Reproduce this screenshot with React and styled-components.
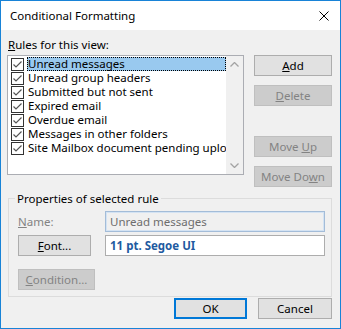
import React from 'react';
import styled, { createGlobalStyle } from 'styled-components';

const GlobalStyle = createGlobalStyle`
  html, body {
    margin: 0;
    padding: 0;
    background: #ffffff;
  }
  body {
    font-family: 'Noto Sans', 'Liberation Sans', sans-serif;
    font-size: 11.5px;
    color: #000000;
  }
  * {
    box-sizing: border-box;
  }
`;

const rules = [
  'Unread messages',
  'Unread group headers',
  'Submitted but not sent',
  'Expired email',
  'Overdue email',
  'Messages in other folders',
  'Site Mailbox document pending upload',
];

function CheckBox() {
  return (
    <svg width="13" height="13" viewBox="0 0 13 13">
      <rect x="0.5" y="0.5" width="12" height="12" fill="#ffffff" stroke="#333333" />
      <path d="M2.5 6.5 L5 9 L10.5 3.5" fill="none" stroke="#555555" strokeWidth="1.2" />
    </svg>
  );
}

function Chevron({ down }) {
  return (
    <svg width="9" height="5" viewBox="0 0 9 5">
      <path
        d={down ? 'M0.5 0.5 L4.5 4.5 L8.5 0.5' : 'M0.5 4.5 L4.5 0.5 L8.5 4.5'}
        fill="none"
        stroke="#a3a3a3"
        strokeWidth="1.3"
      />
    </svg>
  );
}

function App() {
  return (
    <>
      <GlobalStyle />
      <Window>
        <TitleBar>
          <Title>Conditional Formatting</Title>
          <CloseIcon viewBox="0 0 10 10">
            <path d="M0.5 0.5 L9.5 9.5 M9.5 0.5 L0.5 9.5" stroke="#000" strokeWidth="1" />
          </CloseIcon>
        </TitleBar>

        <Content>
          <Label><Key>R</Key>ules for this view:</Label>
          <TopRow>
            <ListBox>
              <Rows>
                {rules.map((r, i) => (
                  <Row key={r}>
                    <CheckBox />
                    <RowText $selected={i === 0}>{r}</RowText>
                  </Row>
                ))}
              </Rows>
              <ScrollBar>
                <Arrow><Chevron /></Arrow>
                <Arrow><Chevron down /></Arrow>
              </ScrollBar>
            </ListBox>
            <SideButtons>
              <Button><span><Key>A</Key>dd</span></Button>
              <Button $off><span><Key>D</Key>elete</span></Button>
              <Button $off $top={21}><span>Move <Key>U</Key>p</span></Button>
              <Button $off><span>Move Do<Key>w</Key>n</span></Button>
            </SideButtons>
          </TopRow>

          <Group>
            <Legend>Properties of selected rule</Legend>
            <GroupBody>
              <FieldRow>
                <FieldLabel><Key>N</Key>ame:</FieldLabel>
                <TextBox $muted>Unread messages</TextBox>
              </FieldRow>
              <FieldRow>
                <Button $w={73}><span><Key>F</Key>ont...</span></Button>
                <TextBox $font>11 pt. Segoe UI</TextBox>
              </FieldRow>
              <FieldRow $top={13}>
                <Button $off $w={77}><span><Key>C</Key>ondition...</span></Button>
              </FieldRow>
            </GroupBody>
          </Group>

          <Footer>
            <Button $w={73} $primary><span>OK</span></Button>
            <Button $w={74}><span>Cancel</span></Button>
          </Footer>
        </Content>
      </Window>
    </>
  );
}

const Window = styled.div`
  width: 341px;
  height: 329px;
  border: 1px solid #1883d7;
  background: #f0f0f0;
  display: flex;
  flex-direction: column;
`;

const TitleBar = styled.div`
  height: 29px;
  background: #ffffff;
  display: flex;
  align-items: center;
  justify-content: space-between;
  padding: 0 11px 0 9px;
`;

const Title = styled.span`
  font-size: 11.5px;
  color: #000000;
`;

const CloseIcon = styled.svg`
  width: 10px;
  height: 10px;
`;

const Content = styled.div`
  flex: 1;
  display: flex;
  flex-direction: column;
  padding: 7px 8px 9px 6px;
`;

const Label = styled.div`
  line-height: 15px;
  height: 15px;
  padding-left: 1px;
`;

const Key = styled.span`
  text-decoration: underline;
`;

const TopRow = styled.div`
  display: flex;
  gap: 10px;
  margin-top: 3px;
`;

const ListBox = styled.div`
  width: 237px;
  height: 120px;
  border: 1px solid #abadb3;
  background: #ffffff;
  display: flex;
`;

const Rows = styled.div`
  flex: 1;
  min-width: 0;
  padding-top: 1px;
  overflow: hidden;
`;

const Row = styled.div`
  display: flex;
  align-items: center;
  height: 14px;
  padding-left: 3px;
  white-space: nowrap;

  svg {
    flex: none;
  }
`;

const RowText = styled.span`
  flex: ${(p) => (p.$selected ? 1 : 'none')};
  height: 14px;
  line-height: 14px;
  margin-left: 3px;
  padding: 0 1px;
  background: ${(p) => (p.$selected ? '#99c9ef' : 'transparent')};
  outline: ${(p) => (p.$selected ? '1px dotted #000000' : 'none')};
  outline-offset: -1px;
`;

const ScrollBar = styled.div`
  width: 17px;
  background: #f0f0f0;
  display: flex;
  flex-direction: column;
  justify-content: space-between;
`;

const Arrow = styled.div`
  height: 17px;
  display: flex;
  align-items: center;
  justify-content: center;
`;

const SideButtons = styled.div`
  display: flex;
  flex-direction: column;
  gap: 9px;
`;

const Button = styled.div`
  width: ${(p) => p.$w || 78}px;
  height: 21px;
  margin-top: ${(p) => p.$top || 0}px;
  display: flex;
  align-items: center;
  justify-content: center;
  font-size: 11.5px;
  white-space: pre;
  background: ${(p) => (p.$off ? '#cccccc' : '#e1e1e1')};
  color: ${(p) => (p.$off ? '#838383' : '#000000')};
  border: ${(p) => (p.$primary ? '2px solid #0078d7' : p.$off ? '1px solid #bfbfbf' : '1px solid #adadad')};
`;

const Group = styled.fieldset`
  margin: 4px 0 0 1px;
  padding: 0;
  border: 1px solid #dcdcdc;
  min-width: 0;
`;

const Legend = styled.legend`
  margin-left: 6px;
  padding: 0 2px;
  line-height: 15px;
  font-size: 11.5px;
`;

const GroupBody = styled.div`
  padding: 5px 6px 6px 9px;
  display: flex;
  flex-direction: column;
  gap: 3px;
`;

const FieldRow = styled.div`
  display: flex;
  align-items: center;
  gap: 14px;
  margin-top: ${(p) => (p.$top ? p.$top - 3 : 0)}px;
`;

const FieldLabel = styled.div`
  width: 73px;
  color: #838383;
`;

const TextBox = styled.div`
  width: 220px;
  height: 21px;
  padding: 0 4px;
  display: flex;
  align-items: center;
  background: ${(p) => (p.$muted ? '#f0f0f0' : '#ffffff')};
  border: 1px solid ${(p) => (p.$muted ? '#a3bcd8' : '#adadad')};
  box-shadow: ${(p) => (p.$muted ? 'inset 0 0 0 1px #d4e3f3' : 'none')};
  color: ${(p) => (p.$font ? '#1e5aa0' : '#6d6d6d')};
  font-weight: ${(p) => (p.$font ? 700 : 400)};
`;

const Footer = styled.div`
  margin-top: auto;
  display: flex;
  justify-content: flex-end;
  gap: 11px;
`;

export default App;
